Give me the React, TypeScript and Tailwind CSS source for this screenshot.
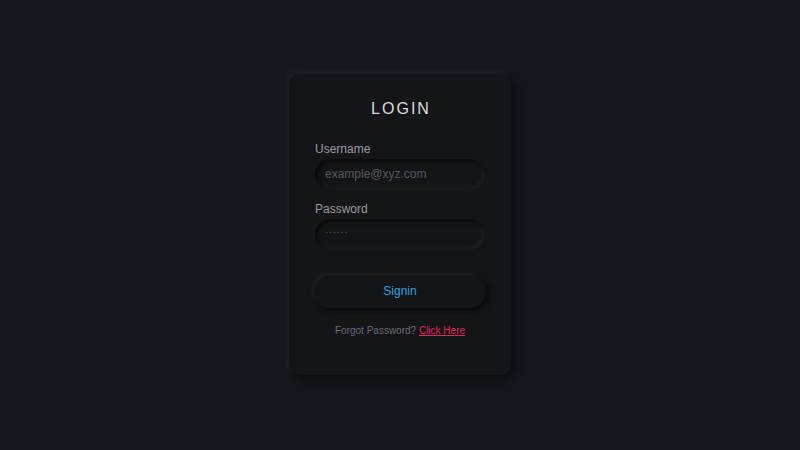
export default function App() {
  return (
    <div
      className="w-[800px] h-[450px] bg-[#16171d] flex items-center justify-center"
      style={{ fontFamily: '"Liberation Sans", Arial, sans-serif' }}
    >
      <div className="w-[222px] h-[301px] mt-[-2px] rounded-[10px] bg-[#141519] shadow-[-3px_-3px_7px_rgba(255,255,255,0.05),4px_4px_8px_rgba(0,0,0,0.55)] px-[26px] pt-[25px] flex flex-col">
        <h1 className="text-center text-[16px] tracking-[2px] text-[#dcdcdc] leading-[20px] pl-[2px]">LOGIN</h1>

        <label className="mt-[22px] text-[12px] leading-[16px] text-[#9b9b9f]">Username</label>
        <div className="mt-[2px] h-[31px] w-[170px] rounded-full bg-[#141519] shadow-[inset_2px_2px_5px_rgba(0,0,0,0.7),inset_-2px_-2px_5px_rgba(255,255,255,0.05)] flex items-center px-[10px]">
          <span className="text-[12px] text-[#56575d]">example@xyz.com</span>
        </div>

        <label className="mt-[11px] text-[12px] leading-[16px] text-[#9b9b9f]">Password</label>
        <div className="mt-[2px] h-[31px] w-[170px] rounded-full bg-[#141519] shadow-[inset_2px_2px_5px_rgba(0,0,0,0.7),inset_-2px_-2px_5px_rgba(255,255,255,0.05)] flex items-center px-[10px]">
          <span className="text-[10px] text-[#56575d] tracking-[0.5px] -mt-[3px]">······</span>
        </div>

        <button className="mt-[25px] h-[33px] w-[172px] -ml-[1px] rounded-full bg-[#141519] shadow-[-2px_-2px_5px_rgba(255,255,255,0.05),3px_3px_6px_rgba(0,0,0,0.6)] text-[#29a3dd] text-[12px]">
          Signin
        </button>

        <p className="mt-[15px] text-center text-[10px] text-[#6c6d72]">
          Forgot Password? <a className="text-[#e0245e] underline" href="#">Click Here</a>
        </p>
      </div>
    </div>
  );
}
